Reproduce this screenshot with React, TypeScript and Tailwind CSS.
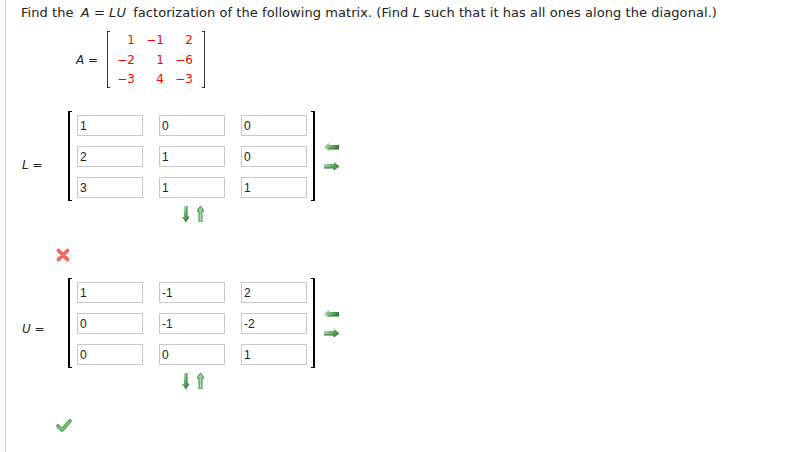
import React from 'react';

const verdana = "font-['DejaVu_Sans','Verdana',sans-serif]";

function LeftArrow() {
	return (
		<svg width="15" height="8" viewBox="0 0 15 8">
			<defs>
				<linearGradient id="la" x1="0" x2="1" y1="0" y2="0">
					<stop offset="0" stopColor="#a6dca6" />
					<stop offset="1" stopColor="#2d7a30" />
				</linearGradient>
			</defs>
			<polygon points="0,4 5,0 5,2 15,2 15,6 5,6 5,8" fill="url(#la)" />
			<polyline points="5,6 15,6 15,2" fill="none" stroke="#2d6e2f" strokeWidth="1" />
		</svg>
	);
}

function RightArrow() {
	return (
		<svg width="15" height="8" viewBox="0 0 15 8">
			<defs>
				<linearGradient id="ra" x1="0" x2="1" y1="0" y2="0">
					<stop offset="0" stopColor="#9fd69f" />
					<stop offset="1" stopColor="#3d8a40" />
				</linearGradient>
			</defs>
			<polygon points="15,4 10,0 10,2 0,2 0,6 10,6 10,8" fill="url(#ra)" />
			<polyline points="0,6 10,6 10,8 15,4" fill="none" stroke="#2d6e2f" strokeWidth="1" />
		</svg>
	);
}

function DownArrow() {
	return (
		<svg width="7" height="16" viewBox="0 0 7 16">
			<defs>
				<linearGradient id="da" x1="0" x2="0" y1="0" y2="1">
					<stop offset="0" stopColor="#a6dca6" />
					<stop offset="1" stopColor="#3b8a3e" />
				</linearGradient>
			</defs>
			<polygon points="3.5,16 0,11 2,11 2,0 5,0 5,11 7,11" fill="url(#da)" />
			<polyline points="5,0 5,11 7,11 3.5,16" fill="none" stroke="#2d6e2f" strokeWidth="1" />
		</svg>
	);
}

function UpArrow() {
	return (
		<svg width="7" height="16" viewBox="0 0 7 16">
			<defs>
				<linearGradient id="ua" x1="0" x2="0" y1="0" y2="1">
					<stop offset="0" stopColor="#8fd08f" />
					<stop offset="1" stopColor="#bde6bd" />
				</linearGradient>
			</defs>
			<polygon points="3.5,0 0,5 2,5 2,16 5,16 5,5 7,5" fill="url(#ua)" stroke="#3b8a3e" strokeWidth="1" />
		</svg>
	);
}

function Cell({ value }: { value: string }) {
	return (
		<input
			readOnly
			value={value}
			className="h-[21px] w-[66px] border border-[#c8c8c8] bg-white px-[2px] font-['Liberation_Sans',Arial,sans-serif] text-[12px] text-[#222] outline-none"
		/>
	);
}

function MatrixInput({ rows }: { rows: string[][] }) {
	return (
		<div className="flex flex-col">
			<div className="flex items-center">
				<div className="flex self-stretch">
					<div className="w-[4px] border-y border-l-2 border-black" />
					<div className="grid grid-cols-[66px_66px_66px] gap-x-[16px] gap-y-[10px] pl-[5px] pr-[4px] pt-[4px] pb-[3px]">
						{rows.flat().map((v, i) => (
							<Cell key={i} value={v} />
						))}
					</div>
					<div className="w-[4px] border-y border-r-2 border-black" />
				</div>
				<div className="ml-[9px] flex flex-col gap-[11px]">
					<LeftArrow />
					<RightArrow />
				</div>
			</div>
			<div className="ml-[114px] mt-[5px] flex gap-[8px]">
				<DownArrow />
				<UpArrow />
			</div>
		</div>
	);
}

function CrossMark() {
	return (
		<svg width="14" height="14" viewBox="0 0 14 14">
			<path d="M2.5 2.5 L11.5 11.5 M11.5 2.5 L2.5 11.5" stroke="#f05656" strokeWidth="3.6" strokeLinecap="round" />
			<path d="M2.5 2.5 L11.5 11.5 M11.5 2.5 L2.5 11.5" stroke="#ff8a8a" strokeWidth="1.2" strokeLinecap="round" opacity="0.6" />
		</svg>
	);
}

function CheckMark() {
	return (
		<svg width="16" height="13" viewBox="0 0 16 13">
			<polyline points="2,7 6,11 14,2" fill="none" stroke="#4a9c4a" strokeWidth="3.6" strokeLinecap="round" strokeLinejoin="round" />
			<polyline points="2,7 6,11 14,2" fill="none" stroke="#86cf86" strokeWidth="1.4" strokeLinecap="round" strokeLinejoin="round" />
		</svg>
	);
}

const A = [
	['1', '−1', '2'],
	['−2', '1', '−6'],
	['−3', '4', '−3'],
];

export default function App() {
	return (
		<div className={`flex h-[452px] w-[799px] bg-white text-[#222] ${verdana}`}>
			<div className="w-[5px]" />
			<div className="flex-1 border-l border-[#cfcfcf] pl-[15px]">
				{/* question */}
				<p className="pt-[5px] text-[13px] leading-[16px] tracking-[0.06px]">
					Find the <span className="ml-[3px] italic">A</span> = <span className="mr-[3px] italic">LU</span> factorization of the
					following matrix. (Find <i>L</i> such that it has all ones along the diagonal.)
				</p>

				{/* matrix A */}
				<div className="mt-[10px] flex items-center">
					<span className="ml-[55px] w-[31px] text-[12px] leading-[16px]">
						<i>A</i> =
					</span>
					<div className="flex">
						<div className="w-[3px] border-y border-l border-[#333]" />
						<div className="grid grid-cols-[25px_29px_29px] gap-y-[3.5px] py-[1px] pr-[9px] text-right text-[12px] leading-[16px] text-[#f00]">
							{A.flat().map((v, i) => (
								<span key={i}>{v}</span>
							))}
						</div>
						<div className="w-[3px] border-y border-r border-[#333]" />
					</div>
				</div>

				{/* L */}
				<div className="mt-[23px] flex items-start">
					<span className="w-[47px] pl-[1px] pt-[46px] text-[12px] leading-[16px]">
						<i>L</i> =
					</span>
					<MatrixInput
						rows={[
							['1', '0', '0'],
							['2', '1', '0'],
							['3', '1', '1'],
						]}
					/>
				</div>

				<div className="ml-[35px] mt-[26px] flex">
					<CrossMark />
				</div>

				{/* U */}
				<div className="mt-[16px] flex items-start">
					<span className="w-[47px] pl-[1px] pt-[43px] text-[12px] leading-[16px]">
						<i>U</i> =
					</span>
					<MatrixInput
						rows={[
							['1', '-1', '2'],
							['0', '-1', '-2'],
							['0', '0', '1'],
						]}
					/>
				</div>

				<div className="ml-[35px] mt-[30px] flex">
					<CheckMark />
				</div>
			</div>
		</div>
	);
}
